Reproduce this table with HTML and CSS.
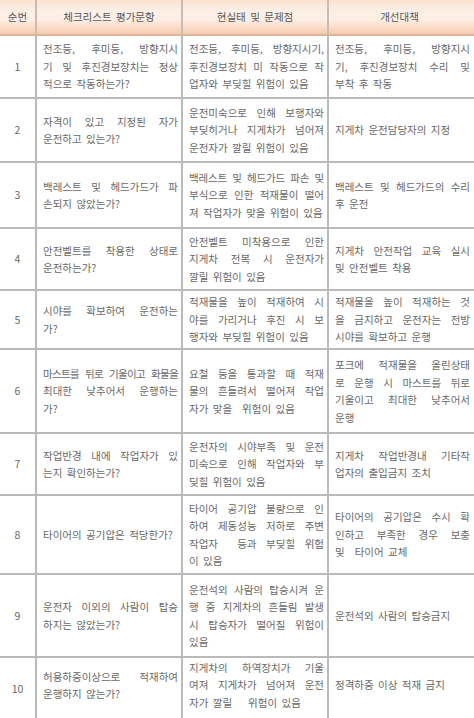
FILE: index.html
```html
<!DOCTYPE html>
<html lang="ko">
<head>
<meta charset="utf-8">
<title>지게차 체크리스트</title>
<link rel="stylesheet" href="styles.css">
</head>
<body>
<table class="sheet">
  <colgroup>
    <col class="c-no">
    <col class="c-q">
    <col class="c-risk">
    <col class="c-fix">
  </colgroup>
  <thead>
    <tr>
      <th>순번</th>
      <th>체크리스트 평가문항</th>
      <th>현실태 및 문제점</th>
      <th>개선대책</th>
    </tr>
  </thead>
  <tbody>
    <tr class="r1">
      <td class="no">1</td>
      <td><span class="j">전조등, 후미등, 방향지시</span><span class="j">기 및 후진경보장치는 정상</span>적으로 작동하는가?</td>
      <td><span class="j">전조등, 후미등, 방향지시기,</span><span class="j">후진경보장치 미 작동으로 작</span>업자와 부딪힐 위험이 있음</td>
      <td><span class="j">전조등, 후미등, 방향지시</span><span class="j">기, 후진경보장치 수리 및</span>부착 후 작동</td>
    </tr>
    <tr class="r2">
      <td class="no">2</td>
      <td><span class="j">자격이 있고 지정된 자가</span>운전하고 있는가?</td>
      <td><span class="j">운전미숙으로 인해 보행자와</span><span class="j">부딪히거나 지게차가 넘어져</span>운전자가 깔릴 위험이 있음</td>
      <td>지게차 운전담당자의 지정</td>
    </tr>
    <tr class="r3">
      <td class="no">3</td>
      <td><span class="j">백레스트 및 헤드가드가 파</span>손되지 않았는가?</td>
      <td><span class="j t1">백레스트 및 헤드가드 파손 및</span><span class="j">부식으로 인한 적재물이 떨어</span>져 작업자가 맞을 위험이 있음</td>
      <td><span class="j">백레스트 및 헤드가드의 수리</span>후 운전</td>
    </tr>
    <tr class="r4">
      <td class="no">4</td>
      <td><span class="j">안전벨트를 착용한 상태로</span>운전하는가?</td>
      <td><span class="j">안전벨트 미착용으로 인한</span><span class="j">지게차 전복 시 운전자가</span>깔릴 위험이 있음</td>
      <td><span class="j">지게차 안전작업 교육 실시</span>및 안전벨트 착용</td>
    </tr>
    <tr class="r5">
      <td class="no">5</td>
      <td><span class="j">시야를 확보하여 운전하는</span>가?</td>
      <td><span class="j">적재물을 높이 적재하여 시</span><span class="j">야를 가리거나 후진 시 보</span>행자와 부딪힐 위험이 있음</td>
      <td><span class="j">적재물을 높이 적재하는 것</span><span class="j">을 금지하고 운전자는 전방</span>시야를 확보하고 운행</td>
    </tr>
    <tr class="r6">
      <td class="no">6</td>
      <td><span class="j t2">마스트를 뒤로 기울이고 화물을</span><span class="j">최대한 낮추어서 운행하는</span>가?</td>
      <td><span class="j">요철 등을 통과할 때 적재</span><span class="j">물의 흔들려서 떨어져 작업</span>자가 맞을<span class="gap-s"></span>위험이 있음</td>
      <td><span class="j">포크에 적재물을 올린상태</span><span class="j">로 운행 시 마스트를 뒤로</span><span class="j">기울이고 최대한 낮추어서</span>운행</td>
    </tr>
    <tr class="r7">
      <td class="no">7</td>
      <td><span class="j">작업반경 내에 작업자가 있</span>는지 확인하는가?</td>
      <td><span class="j">운전자의 시야부족 및 운전</span><span class="j">미숙으로 인해 작업자와 부</span>딪힐 위험이 있음</td>
      <td><span class="j">지게차 작업반경내 기타작</span>업자의 출입금지 조치</td>
    </tr>
    <tr class="r8">
      <td class="no">8</td>
      <td>타이어의 공기압은 적당한가?</td>
      <td><span class="j">타이어 공기압 불량으로 인</span><span class="j">하여 제동성능 저하로 주변</span><span class="j">작업자&nbsp; 등과 부딪힐 위험</span>이 있음</td>
      <td><span class="j">타이어의 공기압은 수시 확</span><span class="j">인하고 부족한 경우 보충</span>및<span class="gap-s"></span>타이어 교체</td>
    </tr>
    <tr class="r9">
      <td class="no">9</td>
      <td><span class="j">운전자 이외의 사람이 탑승</span>하지는 않았는가?</td>
      <td><span class="j">운전석외 사람의 탑승시켜 운</span><span class="j">행 중 지게차의 흔들림 발생</span><span class="j">시 탑승자가 떨어질 위험이</span>있음</td>
      <td>운전석외 사람의 탑승금지</td>
    </tr>
    <tr class="r10">
      <td class="no">10</td>
      <td><span class="j">허용하중이상으로 적재하여</span>운행하지 않는가?</td>
      <td><span class="j">지게차의 하역장치가 기울</span><span class="j">여져 지게차가 넘어져 운전</span>자가 깔릴<span class="gap-l"></span>위험이 있음</td>
      <td>정격하중 이상 적재 금지</td>
    </tr>
  </tbody>
</table>
</body>
</html>
```

FILE: styles.css
```css
html, body {
  margin: 0;
  padding: 0;
  background: #ffffff;
}

body {
  font-family: "Noto Sans CJK KR", "Noto Sans", sans-serif;
  font-size: 10.5px;
  color: #686868;
}

.sheet {
  border-collapse: separate;
  border-spacing: 0;
  table-layout: fixed;
  width: 474px;
}

.c-no { width: 37px; }
.c-q { width: 146px; }
.c-risk { width: 146px; }
.c-fix { width: 145px; }

.sheet th,
.sheet td {
  box-sizing: border-box;
  padding: 0 3px 0 6px;
  border-right: 2px solid #bababa;
  border-bottom: 2px solid #bababa;
  vertical-align: middle;
  line-height: 17.5px;
  word-spacing: 1.5px;
  text-align: left;
  font-weight: normal;
}

.sheet th:last-child,
.sheet td:last-child {
  border-right: none;
  padding-right: 4px;
}

.sheet thead th {
  height: 36px;
  text-align: center;
  color: #585858;
  padding: 0;
  background: linear-gradient(180deg, #fbe2d1 0%, #fdf0e7 35%, #fdede2 60%, #f7cbad 100%);
  border-bottom-color: #d8b59c;
  border-right-color: #cdbab0;
}

.sheet td.no {
  text-align: center;
  padding: 0;
}

.j {
  display: block;
  text-align: justify;
  text-align-last: justify;
  text-justify: inter-word;
  word-spacing: 0;
}

.t1 { letter-spacing: -0.2px; }
.t2 { letter-spacing: -0.65px; }

.gap-s {
  display: inline-block;
  width: 10px;
}

.gap-l {
  display: inline-block;
  width: 16px;
}

.r1 td { height: 63px; }
.r2 td { height: 64px; }
.r3 td { height: 66px; }
.r4 td { height: 62px; }
.r5 td { height: 59px; }
.r6 td { height: 84px; }
.r7 td { height: 62px; }
.r8 td { height: 79px; }
.r9 td { height: 83px; }
.r10 td {
  height: 62px;
  padding-bottom: 8px;
  border-bottom: none;
}
```
